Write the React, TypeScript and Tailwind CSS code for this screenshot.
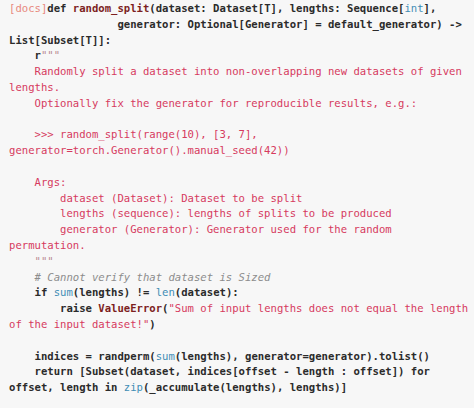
import React from "react";

type Tok = [string, string];

const K = "text-[#2b2b2b] font-bold";
const S = "text-[#d63a5e]";
const B = "text-[#3f8db5]";
const F = "text-[#7d1f1f] font-bold";
const C = "text-[#8c8c8c] italic";
const D = "text-[#e8897e]";

const lines: Tok[][] = [
  [["[docs]", D], ["def ", K], ["random_split", F], ["(dataset: Dataset[T], lengths: Sequence[", K], ["int", B], ["],", K]],
  [["                 generator: Optional[Generator] = default_generator) ->", K]],
  [["List[Subset[T]]:", K]],
  [["    r", K], ['"""', "text-[#b98a93]"]],
  [["    Randomly split a dataset into non-overlapping new datasets of given", S]],
  [["lengths.", S]],
  [["    Optionally fix the generator for reproducible results, e.g.:", S]],
  [],
  [["    >>> random_split(range(10), [3, 7],", S]],
  [["generator=torch.Generator().manual_seed(42))", S]],
  [],
  [["    Args:", S]],
  [["        dataset (Dataset): Dataset to be split", S]],
  [["        lengths (sequence): lengths of splits to be produced", S]],
  [["        generator (Generator): Generator used for the random", S]],
  [["permutation.", S]],
  [['    """', "text-[#b98a93]"]],
  [["    # Cannot verify that dataset is Sized", C]],
  [["    if ", K], ["sum", B], ["(lengths) != ", K], ["len", B], ["(dataset):", K]],
  [["        raise ", K], ["ValueError", F], ["(", K], ['"Sum of input lengths does not equal the length', S]],
  [['of the input dataset!"', S], [")", K]],
  [],
  [["    indices = randperm(", K], ["sum", B], ["(lengths), generator=generator).tolist()", K]],
  [["    return [Subset(dataset, indices[offset - length : offset]) for", K]],
  [["offset, length in ", K], ["zip", B], ["(_accumulate(lengths), lengths)]", K]],
];

export default function App() {
  return (
    <div className="w-[474px] h-[418px] bg-white overflow-hidden">
      <pre className="bg-[#f7f7f7] pl-[9px] pt-[1px] pb-[12px] m-0 font-['DejaVu_Sans_Mono',monospace] text-[10.6px] leading-[15.8px] whitespace-pre overflow-hidden">
        {lines.map((toks, i) => (
          <div key={i} className="h-[15.8px]">
            {toks.map(([t, c], j) => (
              <span key={j} className={c}>
                {t}
              </span>
            ))}
          </div>
        ))}
      </pre>
    </div>
  );
}
